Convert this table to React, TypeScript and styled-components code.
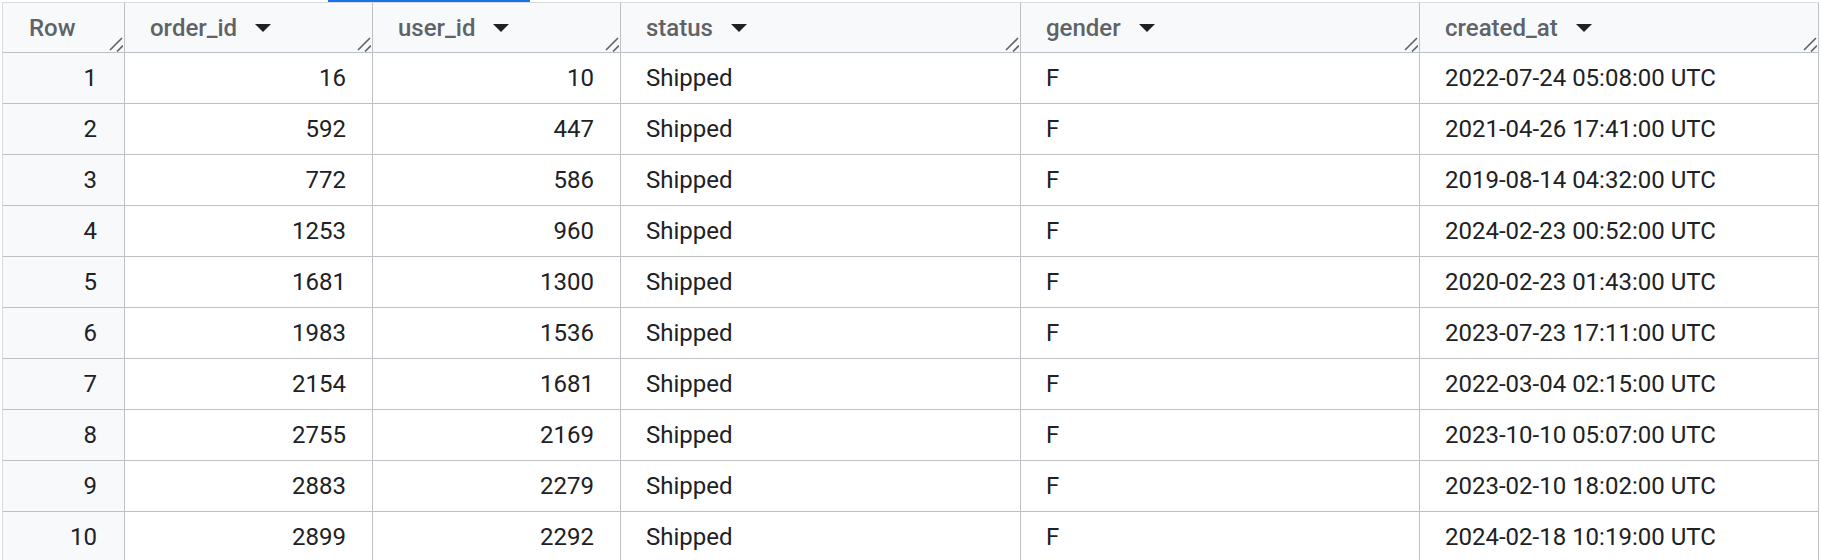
import styled, { createGlobalStyle } from "styled-components";

const GlobalStyle = createGlobalStyle`
  body {
    margin: 0;
    background: #ffffff;
    font-family: Roboto, "Liberation Sans", Arial, sans-serif;
  }
`;

type Column = { key: string; label: string; width: number; numeric?: boolean };

const columns: Column[] = [
  { key: "order_id", label: "order_id", width: 248, numeric: true },
  { key: "user_id", label: "user_id", width: 248, numeric: true },
  { key: "status", label: "status", width: 400 },
  { key: "gender", label: "gender", width: 399 },
  { key: "created_at", label: "created_at", width: 399 },
];

const rows = [
  [16, 10, "Shipped", "F", "2022-07-24 05:08:00 UTC"],
  [592, 447, "Shipped", "F", "2021-04-26 17:41:00 UTC"],
  [772, 586, "Shipped", "F", "2019-08-14 04:32:00 UTC"],
  [1253, 960, "Shipped", "F", "2024-02-23 00:52:00 UTC"],
  [1681, 1300, "Shipped", "F", "2020-02-23 01:43:00 UTC"],
  [1983, 1536, "Shipped", "F", "2023-07-23 17:11:00 UTC"],
  [2154, 1681, "Shipped", "F", "2022-03-04 02:15:00 UTC"],
  [2755, 2169, "Shipped", "F", "2023-10-10 05:07:00 UTC"],
  [2883, 2279, "Shipped", "F", "2023-02-10 18:02:00 UTC"],
  [2899, 2292, "Shipped", "F", "2024-02-18 10:19:00 UTC"],
];

const template = `122px ${columns.map((c) => `${c.width}px`).join(" ")}`;

const ResizeGrip = () => (
  <Grip width="16" height="16" viewBox="0 0 16 16">
    <path d="M3 14 L15 2 M10 15.5 L16 9.5" stroke="#5f6368" strokeWidth="1.6" fill="none" />
  </Grip>
);

const SortArrow = () => (
  <svg width="16" height="8" viewBox="0 0 16 8">
    <path d="M0 0 L16 0 L8 8 Z" fill="#202124" />
  </svg>
);

export default function App() {
  return (
    <Page>
      <GlobalStyle />
      <TabStrip>
        <TabIndicator />
      </TabStrip>
      <Table>
        <HeaderCell $first>
          <HeaderLabel>Row</HeaderLabel>
          <ResizeGrip />
        </HeaderCell>
        {columns.map((c) => (
          <HeaderCell key={c.key}>
            <HeaderLabel>{c.label}</HeaderLabel>
            <SortArrow />
            <ResizeGrip />
          </HeaderCell>
        ))}
        {rows.map((r, i) => (
          <Row key={i}>
            <RowNumber>{i + 1}</RowNumber>
            {r.map((v, j) => (
              <Cell key={j} $numeric={columns[j].numeric}>
                {v}
              </Cell>
            ))}
          </Row>
        ))}
      </Table>
    </Page>
  );
}

const Page = styled.div`
  width: 1822px;
  height: 560px;
  overflow: hidden;
  background: #ffffff;
`;

const TabStrip = styled.div`
  height: 2px;
`;

const TabIndicator = styled.div`
  margin-left: 328px;
  width: 202px;
  height: 2px;
  background: #1a73e8;
`;

const Table = styled.div`
  margin-left: 2px;
  display: grid;
  grid-template-columns: ${template};
  border-top: 1px solid #dadce0;
  border-left: 1px solid #dadce0;
  width: max-content;
`;

const HeaderCell = styled.div<{ $first?: boolean }>`
  position: relative;
  height: 49px;
  display: flex;
  align-items: center;
  gap: 18px;
  padding: 0 25px 0 ${(p) => (p.$first ? 26 : 25)}px;
  background: #f8f9fa;
  border-right: 1px solid #bdc1c6;
  border-bottom: 1px solid #bdc1c6;
`;

const HeaderLabel = styled.span`
  font-size: 24px;
  font-weight: 500;
  color: #5f6368;
  white-space: nowrap;
`;

const Grip = styled.svg`
  position: absolute;
  right: 1px;
  bottom: 0;
`;

const Row = styled.div`
  display: contents;
`;

const Cell = styled.div<{ $numeric?: boolean }>`
  height: 50px;
  display: flex;
  align-items: center;
  justify-content: ${(p) => (p.$numeric ? "flex-end" : "flex-start")};
  padding: 0 26px 0 25px;
  font-size: 24px;
  color: #202124;
  background: #ffffff;
  border-right: 1px solid #bdc1c6;
  border-bottom: 1px solid #bdc1c6;
  white-space: nowrap;
`;

const RowNumber = styled(Cell)`
  justify-content: flex-end;
  padding-right: 27px;
  background: #f8f9fa;
`;
